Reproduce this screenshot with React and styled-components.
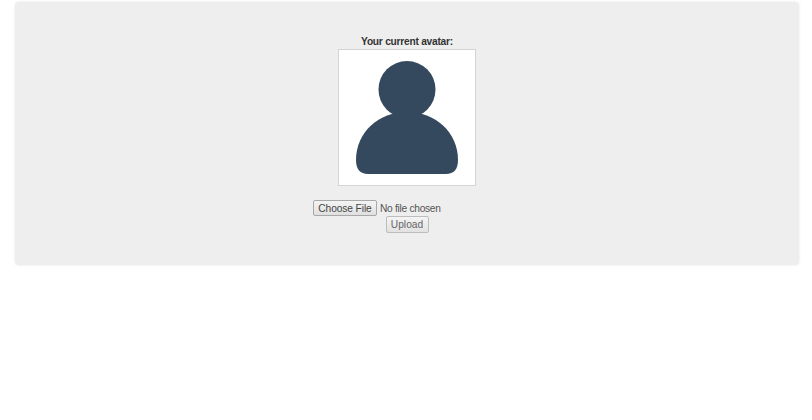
import React from 'react'
import styled, { createGlobalStyle } from 'styled-components'

const GlobalStyle = createGlobalStyle`
  html, body {
    margin: 0;
    padding: 0;
    background: #fff;
  }
  body {
    font-family: "Liberation Sans", Arial, sans-serif;
  }
`

const Page = styled.div`
  width: 812px;
  height: 420px;
  padding: 2px 13px 0 15px;
  box-sizing: border-box;
`

const Panel = styled.div`
  height: 263px;
  padding-top: 34px;
  box-sizing: border-box;
  display: flex;
  flex-direction: column;
  align-items: center;
  background: #eeeeee;
  border-radius: 4px;
  box-shadow: 0 0 3px rgba(0, 0, 0, 0.1);
`

const Caption = styled.div`
  font-size: 10.2px;
  letter-spacing: -0.24px;
  line-height: 12px;
  font-weight: bold;
  color: #333;
  margin-bottom: 1px;
`

const AvatarFrame = styled.div`
  width: 138px;
  height: 137px;
  box-sizing: border-box;
  background: #fff;
  border: 1px solid #d4d4d4;
  display: flex;
  justify-content: center;
  align-items: flex-start;
  overflow: hidden;
`

const Form = styled.form`
  margin-top: 14px;
  display: flex;
  flex-direction: column;
  align-items: center;
`

const FileInput = styled.input`
  width: 188px;
  height: 16px;
  font-family: "Liberation Sans", Arial, sans-serif;
  font-size: 10.2px;
  letter-spacing: -0.28px;
  color: #555;

  &::file-selector-button {
    width: 64px;
    height: 16px;
    padding: 0;
    margin-right: 3px;
    font-size: 10.2px;
    letter-spacing: -0.1px;
    font-family: inherit;
    color: #444;
    background: linear-gradient(#f4f4f4, #e0e0e0);
    border: 1px solid #a8a8a8;
    border-radius: 2px;
  }
`

const UploadButton = styled.button`
  width: 43px;
  height: 17px;
  padding: 0;
  font-family: "Liberation Sans", Arial, sans-serif;
  font-size: 10.2px;
  color: #666;
  background: linear-gradient(#f4f4f4, #e2e2e2);
  border: 1px solid #bdbdbd;
  border-radius: 2px;
`

const AvatarIcon = () => (
  <svg width="136" height="136" viewBox="0 0 136 136">
    <circle cx="68" cy="39.5" r="28.5" fill="#34495e" />
    <path
      d="M17 110 C17 82 40 62 68 62 C96 62 119 82 119 110 C119 119 115 124 107 124 L29 124 C21 124 17 119 17 110 Z"
      fill="#34495e"
    />
  </svg>
)

const App = () => (
  <Page>
    <GlobalStyle />
    <Panel>
      <Caption>Your current avatar:</Caption>
      <AvatarFrame>
        <AvatarIcon />
      </AvatarFrame>
      <Form onSubmit={(e) => e.preventDefault()}>
        <FileInput type="file" />
        <UploadButton type="submit">Upload</UploadButton>
      </Form>
    </Panel>
  </Page>
)

export default App
